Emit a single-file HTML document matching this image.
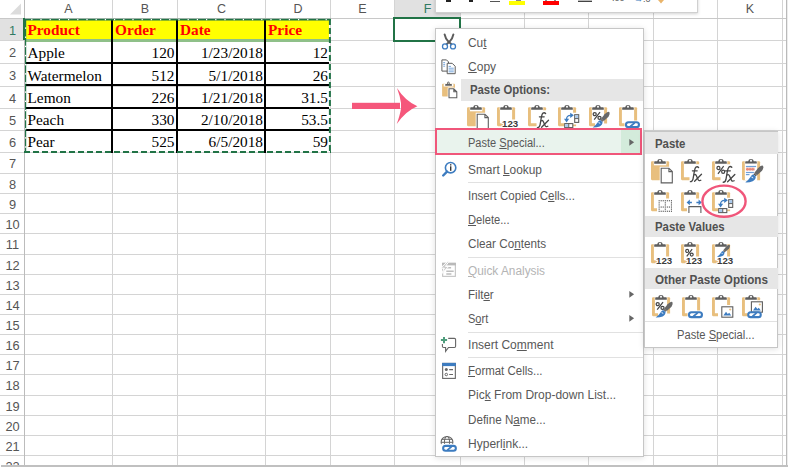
<!DOCTYPE html><html><head><meta charset="utf-8"><style>html,body{margin:0;padding:0;width:788px;height:467px;overflow:hidden;background:#fff;position:relative}.a{position:absolute}.t{position:absolute;white-space:nowrap}u{text-decoration:underline;text-underline-offset:1px}</style></head><body><div class="a" style="left:394px;top:0px;width:66px;height:18px;background:#e1e1e1"></div>
<div class="a" style="left:0px;top:18px;width:24px;height:22px;background:#e1e1e1"></div>
<svg class="a" style="left:0;top:0" width="24" height="18"><polygon points="21,3.5 21,14.5 10,14.5" fill="#dcdcdc"/></svg>
<div class="a" style="left:0px;top:18px;width:786px;height:1px;background:#d4d4d4"></div>
<div class="a" style="left:0px;top:40px;width:786px;height:1px;background:#d4d4d4"></div>
<div class="a" style="left:0px;top:63px;width:786px;height:1px;background:#d4d4d4"></div>
<div class="a" style="left:0px;top:86px;width:786px;height:1px;background:#d4d4d4"></div>
<div class="a" style="left:0px;top:108px;width:786px;height:1px;background:#d4d4d4"></div>
<div class="a" style="left:0px;top:130px;width:786px;height:1px;background:#d4d4d4"></div>
<div class="a" style="left:0px;top:152px;width:786px;height:1px;background:#d4d4d4"></div>
<div class="a" style="left:0px;top:173px;width:786px;height:1px;background:#d4d4d4"></div>
<div class="a" style="left:0px;top:193px;width:786px;height:1px;background:#d4d4d4"></div>
<div class="a" style="left:0px;top:213px;width:786px;height:1px;background:#d4d4d4"></div>
<div class="a" style="left:0px;top:233px;width:786px;height:1px;background:#d4d4d4"></div>
<div class="a" style="left:0px;top:254px;width:786px;height:1px;background:#d4d4d4"></div>
<div class="a" style="left:0px;top:274px;width:786px;height:1px;background:#d4d4d4"></div>
<div class="a" style="left:0px;top:294px;width:786px;height:1px;background:#d4d4d4"></div>
<div class="a" style="left:0px;top:314px;width:786px;height:1px;background:#d4d4d4"></div>
<div class="a" style="left:0px;top:334px;width:786px;height:1px;background:#d4d4d4"></div>
<div class="a" style="left:0px;top:354px;width:786px;height:1px;background:#d4d4d4"></div>
<div class="a" style="left:0px;top:374px;width:786px;height:1px;background:#d4d4d4"></div>
<div class="a" style="left:0px;top:395px;width:786px;height:1px;background:#d4d4d4"></div>
<div class="a" style="left:0px;top:415px;width:786px;height:1px;background:#d4d4d4"></div>
<div class="a" style="left:0px;top:435px;width:786px;height:1px;background:#d4d4d4"></div>
<div class="a" style="left:0px;top:455px;width:786px;height:1px;background:#d4d4d4"></div>
<div class="a" style="left:24px;top:0px;width:1px;height:465px;background:#d4d4d4"></div>
<div class="a" style="left:112px;top:0px;width:1px;height:465px;background:#d4d4d4"></div>
<div class="a" style="left:177px;top:0px;width:1px;height:465px;background:#d4d4d4"></div>
<div class="a" style="left:265px;top:0px;width:1px;height:465px;background:#d4d4d4"></div>
<div class="a" style="left:330px;top:0px;width:1px;height:465px;background:#d4d4d4"></div>
<div class="a" style="left:394px;top:0px;width:1px;height:465px;background:#d4d4d4"></div>
<div class="a" style="left:460px;top:0px;width:1px;height:465px;background:#d4d4d4"></div>
<div class="a" style="left:524px;top:0px;width:1px;height:465px;background:#d4d4d4"></div>
<div class="a" style="left:588px;top:0px;width:1px;height:465px;background:#d4d4d4"></div>
<div class="a" style="left:653px;top:0px;width:1px;height:465px;background:#d4d4d4"></div>
<div class="a" style="left:717px;top:0px;width:1px;height:465px;background:#d4d4d4"></div>
<div class="a" style="left:782px;top:0px;width:1px;height:465px;background:#d4d4d4"></div>
<div class="a" style="left:0px;top:18px;width:786px;height:1px;background:#c8c8c8"></div>
<div class="a" style="left:24px;top:0px;width:1px;height:465px;background:#bcbcbc"></div>
<div class="t" style="left:-31.5px;width:200px;text-align:center;top:2.72px;font:400 12.5px 'Liberation Sans', sans-serif;line-height:12.5px;color:#555;">A</div>
<div class="t" style="left:45.0px;width:200px;text-align:center;top:2.72px;font:400 12.5px 'Liberation Sans', sans-serif;line-height:12.5px;color:#555;">B</div>
<div class="t" style="left:121.5px;width:200px;text-align:center;top:2.72px;font:400 12.5px 'Liberation Sans', sans-serif;line-height:12.5px;color:#555;">C</div>
<div class="t" style="left:198.0px;width:200px;text-align:center;top:2.72px;font:400 12.5px 'Liberation Sans', sans-serif;line-height:12.5px;color:#555;">D</div>
<div class="t" style="left:262.5px;width:200px;text-align:center;top:2.72px;font:400 12.5px 'Liberation Sans', sans-serif;line-height:12.5px;color:#555;">E</div>
<div class="t" style="left:327.5px;width:200px;text-align:center;top:2.72px;font:400 12.5px 'Liberation Sans', sans-serif;line-height:12.5px;color:#2f7a62;">F</div>
<div class="t" style="left:650.0px;width:200px;text-align:center;top:2.72px;font:400 12.5px 'Liberation Sans', sans-serif;line-height:12.5px;color:#555;">K</div>
<div class="t" style="left:-87.5px;width:200px;text-align:center;top:24.86px;font:400 12.8px 'Liberation Sans', sans-serif;line-height:12.8px;color:#2f7a62;">1</div>
<div class="t" style="left:-87.5px;width:200px;text-align:center;top:47.36px;font:400 12.8px 'Liberation Sans', sans-serif;line-height:12.8px;color:#555;">2</div>
<div class="t" style="left:-87.5px;width:200px;text-align:center;top:70.36px;font:400 12.8px 'Liberation Sans', sans-serif;line-height:12.8px;color:#555;">3</div>
<div class="t" style="left:-87.5px;width:200px;text-align:center;top:92.86px;font:400 12.8px 'Liberation Sans', sans-serif;line-height:12.8px;color:#555;">4</div>
<div class="t" style="left:-87.5px;width:200px;text-align:center;top:114.86px;font:400 12.8px 'Liberation Sans', sans-serif;line-height:12.8px;color:#555;">5</div>
<div class="t" style="left:-87.5px;width:200px;text-align:center;top:136.86px;font:400 12.8px 'Liberation Sans', sans-serif;line-height:12.8px;color:#555;">6</div>
<div class="t" style="left:-87.5px;width:200px;text-align:center;top:158.36px;font:400 12.8px 'Liberation Sans', sans-serif;line-height:12.8px;color:#555;">7</div>
<div class="t" style="left:-87.5px;width:200px;text-align:center;top:178.86px;font:400 12.8px 'Liberation Sans', sans-serif;line-height:12.8px;color:#555;">8</div>
<div class="t" style="left:-87.5px;width:200px;text-align:center;top:198.86px;font:400 12.8px 'Liberation Sans', sans-serif;line-height:12.8px;color:#555;">9</div>
<div class="t" style="left:-87.5px;width:200px;text-align:center;top:218.86px;font:400 12.8px 'Liberation Sans', sans-serif;line-height:12.8px;color:#555;">10</div>
<div class="t" style="left:-87.5px;width:200px;text-align:center;top:239.36px;font:400 12.8px 'Liberation Sans', sans-serif;line-height:12.8px;color:#555;">11</div>
<div class="t" style="left:-87.5px;width:200px;text-align:center;top:259.86px;font:400 12.8px 'Liberation Sans', sans-serif;line-height:12.8px;color:#555;">12</div>
<div class="t" style="left:-87.5px;width:200px;text-align:center;top:279.86px;font:400 12.8px 'Liberation Sans', sans-serif;line-height:12.8px;color:#555;">13</div>
<div class="t" style="left:-87.5px;width:200px;text-align:center;top:299.86px;font:400 12.8px 'Liberation Sans', sans-serif;line-height:12.8px;color:#555;">14</div>
<div class="t" style="left:-87.5px;width:200px;text-align:center;top:319.86px;font:400 12.8px 'Liberation Sans', sans-serif;line-height:12.8px;color:#555;">15</div>
<div class="t" style="left:-87.5px;width:200px;text-align:center;top:339.86px;font:400 12.8px 'Liberation Sans', sans-serif;line-height:12.8px;color:#555;">16</div>
<div class="t" style="left:-87.5px;width:200px;text-align:center;top:359.86px;font:400 12.8px 'Liberation Sans', sans-serif;line-height:12.8px;color:#555;">17</div>
<div class="t" style="left:-87.5px;width:200px;text-align:center;top:380.36px;font:400 12.8px 'Liberation Sans', sans-serif;line-height:12.8px;color:#555;">18</div>
<div class="t" style="left:-87.5px;width:200px;text-align:center;top:400.86px;font:400 12.8px 'Liberation Sans', sans-serif;line-height:12.8px;color:#555;">19</div>
<div class="t" style="left:-87.5px;width:200px;text-align:center;top:420.86px;font:400 12.8px 'Liberation Sans', sans-serif;line-height:12.8px;color:#555;">20</div>
<div class="t" style="left:-87.5px;width:200px;text-align:center;top:440.86px;font:400 12.8px 'Liberation Sans', sans-serif;line-height:12.8px;color:#555;">21</div>
<div class="t" style="left:-87.5px;width:200px;text-align:center;top:460.86px;font:400 12.8px 'Liberation Sans', sans-serif;line-height:12.8px;color:#555;">22</div>
<div class="a" style="left:25px;top:19px;width:304px;height:20px;background:#ffff00"></div>
<div class="a" style="left:25px;top:39px;width:304px;height:3px;background:#8fc089"></div>
<div class="a" style="left:111px;top:19px;width:2px;height:134px;background:#000"></div>
<div class="a" style="left:176px;top:19px;width:2px;height:134px;background:#000"></div>
<div class="a" style="left:264px;top:19px;width:2px;height:134px;background:#000"></div>
<div class="a" style="left:25px;top:62px;width:304px;height:2px;background:#000"></div>
<div class="a" style="left:25px;top:84px;width:304px;height:2px;background:#000"></div>
<div class="a" style="left:25px;top:107px;width:304px;height:2px;background:#000"></div>
<div class="a" style="left:25px;top:129px;width:304px;height:2px;background:#000"></div>
<div class="t" style="left:27.5px;top:22.19px;font:700 15.3px 'Liberation Serif', serif;line-height:15.3px;color:#ff0000;">Product</div>
<div class="t" style="left:115px;top:22.19px;font:700 15.3px 'Liberation Serif', serif;line-height:15.3px;color:#ff0000;">Order</div>
<div class="t" style="left:180px;top:22.19px;font:700 15.3px 'Liberation Serif', serif;line-height:15.3px;color:#ff0000;">Date</div>
<div class="t" style="left:268px;top:22.19px;font:700 15.3px 'Liberation Serif', serif;line-height:15.3px;color:#ff0000;">Price</div>
<div class="t" style="left:27.5px;top:45.19px;font:400 15.3px 'Liberation Serif', serif;line-height:15.3px;color:#000;">Apple</div>
<div class="t" style="right:613.5px;top:45.19px;font:400 15.3px 'Liberation Serif', serif;line-height:15.3px;color:#000;">120</div>
<div class="t" style="right:525px;top:45.19px;font:400 15.3px 'Liberation Serif', serif;line-height:15.3px;color:#000;">1/23/2018</div>
<div class="t" style="right:460px;top:45.19px;font:400 15.3px 'Liberation Serif', serif;line-height:15.3px;color:#000;">12</div>
<div class="t" style="left:27.5px;top:67.69px;font:400 15.3px 'Liberation Serif', serif;line-height:15.3px;color:#000;">Watermelon</div>
<div class="t" style="right:613.5px;top:67.69px;font:400 15.3px 'Liberation Serif', serif;line-height:15.3px;color:#000;">512</div>
<div class="t" style="right:525px;top:67.69px;font:400 15.3px 'Liberation Serif', serif;line-height:15.3px;color:#000;">5/1/2018</div>
<div class="t" style="right:460px;top:67.69px;font:400 15.3px 'Liberation Serif', serif;line-height:15.3px;color:#000;">26</div>
<div class="t" style="left:27.5px;top:89.99px;font:400 15.3px 'Liberation Serif', serif;line-height:15.3px;color:#000;">Lemon</div>
<div class="t" style="right:613.5px;top:89.99px;font:400 15.3px 'Liberation Serif', serif;line-height:15.3px;color:#000;">226</div>
<div class="t" style="right:525px;top:89.99px;font:400 15.3px 'Liberation Serif', serif;line-height:15.3px;color:#000;">1/21/2018</div>
<div class="t" style="right:460px;top:89.99px;font:400 15.3px 'Liberation Serif', serif;line-height:15.3px;color:#000;">31.5</div>
<div class="t" style="left:27.5px;top:112.19px;font:400 15.3px 'Liberation Serif', serif;line-height:15.3px;color:#000;">Peach</div>
<div class="t" style="right:613.5px;top:112.19px;font:400 15.3px 'Liberation Serif', serif;line-height:15.3px;color:#000;">330</div>
<div class="t" style="right:525px;top:112.19px;font:400 15.3px 'Liberation Serif', serif;line-height:15.3px;color:#000;">2/10/2018</div>
<div class="t" style="right:460px;top:112.19px;font:400 15.3px 'Liberation Serif', serif;line-height:15.3px;color:#000;">53.5</div>
<div class="t" style="left:27.5px;top:134.39px;font:400 15.3px 'Liberation Serif', serif;line-height:15.3px;color:#000;">Pear</div>
<div class="t" style="right:613.5px;top:134.39px;font:400 15.3px 'Liberation Serif', serif;line-height:15.3px;color:#000;">525</div>
<div class="t" style="right:525px;top:134.39px;font:400 15.3px 'Liberation Serif', serif;line-height:15.3px;color:#000;">6/5/2018</div>
<div class="t" style="right:460px;top:134.39px;font:400 15.3px 'Liberation Serif', serif;line-height:15.3px;color:#000;">59</div>
<svg class="a" style="left:0;top:0" width="788" height="467"><g fill="none" stroke="#217346"><line x1="24" y1="19.6" x2="331" y2="19.6" stroke-width="1.6"/><line x1="24" y1="152" x2="331" y2="152" stroke-width="2" stroke-dasharray="6 3"/><line x1="25.6" y1="19" x2="25.6" y2="153" stroke-width="1.2"/><line x1="329.9" y1="19" x2="329.9" y2="153" stroke-width="2" stroke-dasharray="6 3"/></g><g fill="#fff"><rect x="31.2" y="19" width="1.2" height="1.2"/><rect x="40.4" y="19" width="1.2" height="1.2"/><rect x="49.6" y="19" width="1.2" height="1.2"/><rect x="58.8" y="19" width="1.2" height="1.2"/><rect x="68.0" y="19" width="1.2" height="1.2"/><rect x="77.2" y="19" width="1.2" height="1.2"/><rect x="86.4" y="19" width="1.2" height="1.2"/><rect x="95.6" y="19" width="1.2" height="1.2"/><rect x="104.8" y="19" width="1.2" height="1.2"/><rect x="114.0" y="19" width="1.2" height="1.2"/><rect x="123.2" y="19" width="1.2" height="1.2"/><rect x="132.4" y="19" width="1.2" height="1.2"/><rect x="141.6" y="19" width="1.2" height="1.2"/><rect x="150.8" y="19" width="1.2" height="1.2"/><rect x="160.0" y="19" width="1.2" height="1.2"/><rect x="169.2" y="19" width="1.2" height="1.2"/><rect x="178.4" y="19" width="1.2" height="1.2"/><rect x="187.6" y="19" width="1.2" height="1.2"/><rect x="196.8" y="19" width="1.2" height="1.2"/><rect x="206.0" y="19" width="1.2" height="1.2"/><rect x="215.2" y="19" width="1.2" height="1.2"/><rect x="224.4" y="19" width="1.2" height="1.2"/><rect x="233.6" y="19" width="1.2" height="1.2"/><rect x="242.8" y="19" width="1.2" height="1.2"/><rect x="252.0" y="19" width="1.2" height="1.2"/><rect x="261.2" y="19" width="1.2" height="1.2"/><rect x="270.4" y="19" width="1.2" height="1.2"/><rect x="279.6" y="19" width="1.2" height="1.2"/><rect x="288.8" y="19" width="1.2" height="1.2"/><rect x="298.0" y="19" width="1.2" height="1.2"/><rect x="307.2" y="19" width="1.2" height="1.2"/><rect x="316.4" y="19" width="1.2" height="1.2"/><rect x="325.6" y="19" width="1.2" height="1.2"/><rect x="25" y="27.4" width="1.2" height="1.4"/><rect x="25" y="36.5" width="1.2" height="1.4"/><rect x="25" y="45.7" width="1.2" height="1.4"/><rect x="25" y="54.9" width="1.2" height="1.4"/><rect x="25" y="64.0" width="1.2" height="1.4"/><rect x="25" y="73.2" width="1.2" height="1.4"/><rect x="25" y="82.3" width="1.2" height="1.4"/><rect x="25" y="91.4" width="1.2" height="1.4"/><rect x="25" y="100.6" width="1.2" height="1.4"/><rect x="25" y="109.8" width="1.2" height="1.4"/><rect x="25" y="118.9" width="1.2" height="1.4"/><rect x="25" y="128.1" width="1.2" height="1.4"/><rect x="25" y="137.2" width="1.2" height="1.4"/><rect x="25" y="146.3" width="1.2" height="1.4"/></g></svg>
<div class="a" style="left:23px;top:18px;width:2px;height:22px;background:#217346"></div>
<div class="a" style="left:393px;top:17px;width:68px;height:25px;border:2px solid #217346;box-sizing:border-box"></div>
<div class="a" style="left:786px;top:0px;width:1.3px;height:466px;background:#bababa"></div>
<div class="a" style="left:787.3px;top:0px;width:0.7px;height:467px;background:#ececec"></div>
<div class="a" style="left:1px;top:465px;width:786.5px;height:2px;background:#c0c0c0"></div>
<svg class="a" style="left:0;top:0" width="788" height="467"><g fill="#f5577b"><rect x="352" y="102.8" width="48" height="6.2"/><path d="M397,88.1 Q405.5,101.5 417.4,106.2 Q405.5,111 396.7,124.1 Q400,115 401,108.8 L401,103 Q400,96 397,88.1Z"/></g></svg>
<div class="a" style="left:435px;top:-30px;width:263px;height:42.5px;background:#fff;border:1px solid #d0d0d0;box-sizing:border-box;box-shadow:0 1px 3px rgba(0,0,0,0.18)"></div>
<div class="a" style="left:446px;top:0px;width:5px;height:1.5px;background:#222"></div>
<div class="a" style="left:469px;top:0px;width:4px;height:1.5px;background:#222"></div>
<div class="a" style="left:490px;top:1px;width:10px;height:1px;background:#555"></div>
<div class="a" style="left:516px;top:0px;width:5px;height:1px;background:#888"></div>
<div class="a" style="left:508.5px;top:1px;width:16px;height:3.5px;background:#ffff00"></div>
<div class="a" style="left:545px;top:0px;width:2px;height:1px;background:#888"></div>
<div class="a" style="left:554px;top:0px;width:2px;height:1px;background:#888"></div>
<div class="a" style="left:543px;top:1px;width:16px;height:3.5px;background:#ff0000"></div>
<div class="a" style="left:578px;top:1px;width:14px;height:1.2px;background:#444"></div>
<div class="a" style="left:578px;top:0px;width:14px;height:1px;background:#bbb"></div>
<div class="t" style="left:612px;top:-7px;font:400 9px 'Liberation Sans', sans-serif;color:#555">.00</div>
<div class="t" style="left:634px;top:-6.5px;font:700 9px 'Liberation Sans', sans-serif;color:#3d7cc0">&#8594;<span style="color:#555;font-weight:400">.0</span></div>
<svg class="a" style="left:656px;top:-4px" width="10" height="8"><path d="M5,7.4 L9.2,2.6 L5,-2 L0.8,2.6Z" fill="#e9b46a"/></svg>
<div class="a" style="left:435px;top:28px;width:209px;height:429.3px;background:#fff;border:1px solid #c6c6c6;box-sizing:border-box;box-shadow:0 1px 6px rgba(0,0,0,0.13)"></div>
<svg class="a" style="left:436px;top:30px" width="26" height="26"><path d="M8.6,4.4 Q9.4,8.6 12.4,11.6 L15.4,14.2 M17.4,4.4 Q16.6,8.6 13.6,11.6 L10.6,14.2" stroke="#5c5c5c" stroke-width="2" fill="none" stroke-linecap="round"/><circle cx="9" cy="16.4" r="2.5" fill="none" stroke="#3d7cc0" stroke-width="1.3"/><circle cx="17" cy="16.4" r="2.5" fill="none" stroke="#3d7cc0" stroke-width="1.3"/></svg>
<div class="t" style="left:468.1px;top:36.84px;font:400 12px 'Liberation Sans', sans-serif;line-height:12px;color:#585858;transform:scaleX(0.99);transform-origin:0 0;">Cu<u>t</u></div>
<svg class="a" style="left:436px;top:54px" width="26" height="26"><path d="M5.9,5.9 h4.6 l2,2 v9.2 h-6.6z" fill="#fff" stroke="#5c5c5c" stroke-width="1"/><path d="M11.2,9.3 h5 l3,3 v7.4 h-8z" fill="#fff" stroke="#5c5c5c" stroke-width="1"/><path d="M7.2,8.6 h1.9 M7.2,10.4 h1.9 M7.2,12.2 h1.9" stroke="#6d9fd8" stroke-width="0.9"/><path d="M12.6,12.4 h2.4 M12.6,14.2 h5.2 M12.6,16 h5.2 M12.6,17.8 h5.2" stroke="#6d9fd8" stroke-width="0.9"/></svg>
<div class="t" style="left:468.1px;top:60.84px;font:400 12px 'Liberation Sans', sans-serif;line-height:12px;color:#585858;"><u>C</u>opy</div>
<div class="a" style="left:461px;top:78.5px;width:182px;height:22.5px;background:#e6e6e6"></div>
<svg class="a" style="left:438px;top:78px" width="24" height="24"><rect x="4.1" y="5.7" width="12.9" height="12.8" rx="0.8" fill="#e8bf7e"/><rect x="5.7" y="5.7" width="9.7" height="2.8" fill="#fff"/><path d="M7.2,7.7 V6.5 Q7.2,5.9 7.8,5.9 H9 Q9.2,3.6 10.4,3.6 Q11.6,3.6 11.8,5.9 H13.3 Q13.9,5.9 13.9,6.5 V7.7 Z" fill="#5e5e5e"/><circle cx="10.4" cy="5.1" r="0.6" fill="#fff"/><path d="M11,10.8 h4.8 l3,3 v6 h-7.8z" fill="#fff" stroke="#fff" stroke-width="2.6"/><path d="M11,10.8 h4.8 l3,3 v6 h-7.8z M15.8,10.8 v3 h3" fill="#fff" stroke="#5e5e5e" stroke-width="1.05"/></svg>
<div class="t" style="left:470.3px;top:83.94px;font:700 12px 'Liberation Sans', sans-serif;line-height:12px;color:#505050;transform:scaleX(0.945);transform-origin:0 0;">Paste Options:</div>
<svg class="a" style="left:467.1px;top:105.0px" width="26" height="26" viewBox="0 0 26 26"><rect x="0" y="2.2" width="18.1" height="19" rx="1.1" fill="#e8bf7e"/><rect x="2.9" y="2.2" width="12.4" height="4.1" fill="#fff"/><path d="M3.2,4.7 V2.9 Q3.2,2.2 3.9,2.2 H6.2 Q6.4,0 9,0 Q11.6,0 11.8,2.2 H14.1 Q14.8,2.2 14.8,2.9 V4.7 Z" fill="#5e5e5e" stroke="#fff" stroke-width="0.9" paint-order="stroke"/><circle cx="9" cy="1.75" r="1.0" fill="#fff"/><path d="M10.2,9.2 h7.699999999999999 l3.4,3.4 v11.299999999999999 h-11.1z" fill="#fff" stroke="#fff" stroke-width="3"/><path d="M10.2,9.2 h7.699999999999999 l3.4,3.4 v11.299999999999999 h-11.1z M17.9,9.2 v3.4 h3.4" fill="#fff" stroke="#5e5e5e" stroke-width="1.1"/></svg>
<svg class="a" style="left:497.46px;top:105.0px" width="26" height="26" viewBox="0 0 26 26"><path d="M0,3.3 Q0,2.2 1.1,2.2 H2.9 V18.3 H6 V21.2 H1.1 Q0,21.2 0,20.1 Z" fill="#e8bf7e"/><path d="M15.1,2.2 H17 Q18.1,2.2 18.1,3.3 V14.4 H15.1 Z" fill="#e8bf7e"/><path d="M3.2,4.7 V2.9 Q3.2,2.2 3.9,2.2 H6.2 Q6.4,0 9,0 Q11.6,0 11.8,2.2 H14.1 Q14.8,2.2 14.8,2.9 V4.7 Z" fill="#5e5e5e" stroke="#fff" stroke-width="0.9" paint-order="stroke"/><circle cx="9" cy="1.75" r="1.0" fill="#fff"/><text x="5.0" y="22.1" font-family="Liberation Sans" font-weight="700" font-size="9.2" fill="#fff" stroke="#fff" stroke-width="1.6" textLength="16.2" lengthAdjust="spacingAndGlyphs">123</text><text x="5.0" y="22.1" font-family="Liberation Sans" font-weight="700" font-size="9.2" fill="#3c3c3c" textLength="16.2" lengthAdjust="spacingAndGlyphs">123</text></svg>
<svg class="a" style="left:527.82px;top:105.0px" width="26" height="26" viewBox="0 0 26 26"><path d="M0,3.3 Q0,2.2 1.1,2.2 H2.9 V18.3 H8.5 V21.2 H1.1 Q0,21.2 0,20.1 Z" fill="#e8bf7e"/><path d="M15.1,2.2 H17 Q18.1,2.2 18.1,3.3 V5.3 H15.1 Z" fill="#e8bf7e"/><path d="M3.2,4.7 V2.9 Q3.2,2.2 3.9,2.2 H6.2 Q6.4,0 9,0 Q11.6,0 11.8,2.2 H14.1 Q14.8,2.2 14.8,2.9 V4.7 Z" fill="#5e5e5e" stroke="#fff" stroke-width="0.9" paint-order="stroke"/><circle cx="9" cy="1.75" r="1.0" fill="#fff"/><g transform="translate(-0.4,0.1) scale(1.0)" fill="none" stroke="#454545" stroke-width="1.3" stroke-linecap="round"><path d="M18,8.4 Q16.8,7.1 15.4,8 Q14.4,8.8 13.8,12 L12.4,20 Q11.8,22.6 9.8,22.6"/><path d="M11.8,11.7 H16.6"/><path d="M13.8,15.6 Q15,14.9 15.8,16.6 L17.6,20.6 Q18.4,22.2 20.2,21.2"/><path d="M20.9,15.2 L14,22.2"/></g></svg>
<svg class="a" style="left:558.18px;top:105.0px" width="26" height="26" viewBox="0 0 26 26"><path d="M0,3.3 Q0,2.2 1.1,2.2 H2.9 V18.3 H6 V21.2 H1.1 Q0,21.2 0,20.1 Z" fill="#e8bf7e"/><path d="M15.1,2.2 H17 Q18.1,2.2 18.1,3.3 V7.8 H15.1 Z" fill="#e8bf7e"/><rect x="15.1" y="19.5" width="3" height="1.6999999999999993" fill="#e8bf7e"/><path d="M3.2,4.7 V2.9 Q3.2,2.2 3.9,2.2 H6.2 Q6.4,0 9,0 Q11.6,0 11.8,2.2 H14.1 Q14.8,2.2 14.8,2.9 V4.7 Z" fill="#5e5e5e" stroke="#fff" stroke-width="0.9" paint-order="stroke"/><circle cx="9" cy="1.75" r="1.0" fill="#fff"/><path d="M8.6,14.4 Q8.4,10.4 12.8,10.3" stroke="#3d7cc0" stroke-width="1.3" fill="none"/><path d="M12.2,7.7 L15.9,10.3 L12.2,12.9 Z" fill="#3d7cc0"/><path d="M6,13.8 L8.6,17.5 L11.2,13.8 Z" fill="#3d7cc0"/><rect x="16.7" y="9.7" width="4" height="7.7" fill="#fff" stroke="#5e5e5e" stroke-width="1.1"/><rect x="17.25" y="10.25" width="2.9" height="3.2" fill="#a9c9ec"/><line x1="16.7" y1="13.6" x2="20.7" y2="13.6" stroke="#5e5e5e" stroke-width="1"/><rect x="6.7" y="18.6" width="8.1" height="4" fill="#fff" stroke="#5e5e5e" stroke-width="1.1"/><rect x="7.25" y="19.15" width="3.3" height="2.9" fill="#a9c9ec"/><line x1="10.75" y1="18.6" x2="10.75" y2="22.6" stroke="#5e5e5e" stroke-width="1"/></svg>
<svg class="a" style="left:588.54px;top:105.0px" width="26" height="26" viewBox="0 0 26 26"><path d="M0,3.3 Q0,2.2 1.1,2.2 H2.9 V18.3 H6 V21.2 H1.1 Q0,21.2 0,20.1 Z" fill="#e8bf7e"/><path d="M15.1,2.2 H17 Q18.1,2.2 18.1,3.3 V18.4 H15.1 Z" fill="#e8bf7e"/><path d="M3.2,4.7 V2.9 Q3.2,2.2 3.9,2.2 H6.2 Q6.4,0 9,0 Q11.6,0 11.8,2.2 H14.1 Q14.8,2.2 14.8,2.9 V4.7 Z" fill="#5e5e5e" stroke="#fff" stroke-width="0.9" paint-order="stroke"/><circle cx="9" cy="1.75" r="1.0" fill="#fff"/><g transform="translate(3.6,7.02) scale(1.000,0.986)" fill="none" stroke="#454545" stroke-width="1.25"><ellipse cx="2.1" cy="2.1" rx="1.55" ry="1.6"/><ellipse cx="6.9" cy="5.9" rx="1.55" ry="1.6"/><path d="M7.4,0.2 L1.6,7.8"/></g><g transform="translate(0.8,2.7) scale(0.85)"><path d="M17.4,7.8 Q21,3.8 23,5 Q24.2,6.8 22,10.6 L16.4,15.6 L13.3,12.9 Z" fill="#686868"/><path d="M13.4,13.3 L16.1,15.6 L15.1,16.6 L12.4,14.3 Z" fill="#4e4e4e"/><path d="M12.2,14.4 L15,16.8 Q15.2,20.2 11.6,22.1 Q8,23.6 3.4,23.4 Q6.8,21 8.9,17.7 Q10.4,14.9 12.2,14.4 Z" fill="#3d7cc0"/><path d="M10.3,17.6 Q11.7,17.2 11.9,18.8" stroke="#fff" stroke-width="1.1" fill="none"/></g></svg>
<svg class="a" style="left:618.9px;top:105.0px" width="26" height="26" viewBox="0 0 26 26"><path d="M0,3.3 Q0,2.2 1.1,2.2 H2.9 V18.3 H5.5 V21.2 H1.1 Q0,21.2 0,20.1 Z" fill="#e8bf7e"/><path d="M15.1,2.2 H17 Q18.1,2.2 18.1,3.3 V15.6 H15.1 Z" fill="#e8bf7e"/><path d="M3.2,4.7 V2.9 Q3.2,2.2 3.9,2.2 H6.2 Q6.4,0 9,0 Q11.6,0 11.8,2.2 H14.1 Q14.8,2.2 14.8,2.9 V4.7 Z" fill="#5e5e5e" stroke="#fff" stroke-width="0.9" paint-order="stroke"/><circle cx="9" cy="1.75" r="1.0" fill="#fff"/><g transform="translate(5.9,16.2) scale(1.000,1.000)"><rect x="1.05" y="1.05" width="13" height="4.9" rx="2.45" fill="none" stroke="#3d7cc0" stroke-width="2.1"/><path d="M5.4,5.3 L9.7,1.7" stroke="#3d7cc0" stroke-width="1.8"/></g></svg>
<div class="a" style="left:435px;top:128.3px;width:207px;height:26.6px;background:#e9f3ed;border:2px solid #f0567a;box-sizing:border-box"></div>
<div class="a" style="left:620.5px;top:130.3px;width:19.3px;height:22.6px;background:#d3ebdb"></div>
<div class="t" style="left:468.1px;top:137.44px;font:400 12px 'Liberation Sans', sans-serif;line-height:12px;color:#585858;transform:scaleX(0.92);transform-origin:0 0;">Paste <u>S</u>pecial...</div>
<svg class="a" style="left:628px;top:138px" width="8" height="9"><path d="M1.3,1 L6.1,4.35 L1.3,7.7Z" fill="#666"/></svg>
<svg class="a" style="left:440px;top:160px" width="20" height="20"><circle cx="10.6" cy="7.7" r="5.2" fill="#fff" stroke="#3d7cc0" stroke-width="1.6"/><path d="M7,11.6 L3.2,15.5" stroke="#3d7cc0" stroke-width="2.4" stroke-linecap="round"/><rect x="10" y="4.2" width="1.4" height="1.3" fill="#333"/><rect x="10" y="6.3" width="1.4" height="4.5" fill="#333"/></svg>
<div class="t" style="left:468.1px;top:164.44px;font:400 12px 'Liberation Sans', sans-serif;line-height:12px;color:#585858;transform:scaleX(0.99);transform-origin:0 0;">Smart <u>L</u>ookup</div>
<div class="a" style="left:468px;top:181.5px;width:175px;height:1px;background:#e1e1e1"></div>
<div class="t" style="left:468.1px;top:190.24px;font:400 12px 'Liberation Sans', sans-serif;line-height:12px;color:#585858;transform:scaleX(0.96);transform-origin:0 0;">Insert Copied C<u>e</u>lls...</div>
<div class="t" style="left:468.1px;top:214.34px;font:400 12px 'Liberation Sans', sans-serif;line-height:12px;color:#585858;transform:scaleX(0.93);transform-origin:0 0;"><u>D</u>elete...</div>
<div class="t" style="left:468.1px;top:238.44px;font:400 12px 'Liberation Sans', sans-serif;line-height:12px;color:#585858;transform:scaleX(0.976);transform-origin:0 0;">Clear Co<u>n</u>tents</div>
<div class="a" style="left:468px;top:257px;width:175px;height:1px;background:#e1e1e1"></div>
<svg class="a" style="left:436px;top:258px" width="26" height="26"><rect x="6.65" y="5.35" width="12.7" height="13" fill="#fff" stroke="#c2c2c2" stroke-width="1.1"/><rect x="6.1" y="4.8" width="13.8" height="2.6" fill="#b9b9b9"/><path d="M10.3,9.8 h4.8 M10.3,13.2 h7.4 M10.3,15.9 h5.1" stroke="#bdbdbd" stroke-width="1.5"/><path d="M11.8,3.2 L4.6,10.2 L8.4,10.2 L5.4,16 L12.8,8.4 L9.4,8.4 L13.2,3.2 Z" fill="#cbcbcb" stroke="#fff" stroke-width="1"/></svg>
<div class="t" style="left:468.1px;top:265.04px;font:400 12px 'Liberation Sans', sans-serif;line-height:12px;color:#b4b4b4;transform:scaleX(0.987);transform-origin:0 0;"><u>Q</u>uick Analysis</div>
<div class="t" style="left:468.1px;top:288.74px;font:400 12px 'Liberation Sans', sans-serif;line-height:12px;color:#585858;transform:scaleX(0.964);transform-origin:0 0;">Filt<u>e</u>r</div>
<svg class="a" style="left:628px;top:289.5px" width="8" height="9"><path d="M1.3,1 L6.1,4.35 L1.3,7.7Z" fill="#666"/></svg>
<div class="t" style="left:468.1px;top:312.94px;font:400 12px 'Liberation Sans', sans-serif;line-height:12px;color:#585858;transform:scaleX(0.92);transform-origin:0 0;">S<u>o</u>rt</div>
<svg class="a" style="left:628px;top:313.5px" width="8" height="9"><path d="M1.3,1 L6.1,4.35 L1.3,7.7Z" fill="#666"/></svg>
<div class="a" style="left:468px;top:331.5px;width:175px;height:1px;background:#e1e1e1"></div>
<svg class="a" style="left:436px;top:334px" width="26" height="26"><path d="M12.2,4.4 H18.4 Q19.6,4.4 19.6,5.6 V12.3 Q19.6,13.5 18.4,13.5 H12.5 L9.6,17.3 V13.5 H7.6 Q6.4,13.5 6.4,12.3 V10" fill="none" stroke="#666" stroke-width="1.1"/><path d="M8,3 v6.2 M4.9,6.1 h6.2" stroke="#4f9d7d" stroke-width="2"/></svg>
<div class="t" style="left:468.1px;top:339.24px;font:400 12px 'Liberation Sans', sans-serif;line-height:12px;color:#585858;">Insert Co<u>m</u>ment</div>
<div class="a" style="left:468px;top:357.3px;width:175px;height:1px;background:#e1e1e1"></div>
<svg class="a" style="left:436px;top:360px" width="26" height="26"><rect x="6.65" y="3.4" width="12.7" height="15" fill="#fff" stroke="#666" stroke-width="1.1"/><rect x="6.1" y="2.9" width="13.8" height="3.2" fill="#3d7cc0"/><circle cx="10.3" cy="9.6" r="1.5" fill="#666"/><circle cx="10.3" cy="14.5" r="1.25" fill="none" stroke="#666" stroke-width="1"/><path d="M13.2,9.6 H17 M13.2,14.5 H17" stroke="#666" stroke-width="1.2"/></svg>
<div class="t" style="left:468.1px;top:365.44px;font:400 12px 'Liberation Sans', sans-serif;line-height:12px;color:#585858;transform:scaleX(0.955);transform-origin:0 0;"><u>F</u>ormat Cells...</div>
<div class="t" style="left:468.1px;top:388.94px;font:400 12px 'Liberation Sans', sans-serif;line-height:12px;color:#585858;">Pic<u>k</u> From Drop-down List...</div>
<div class="t" style="left:468.1px;top:413.64px;font:400 12px 'Liberation Sans', sans-serif;line-height:12px;color:#585858;transform:scaleX(0.97);transform-origin:0 0;">Define N<u>a</u>me...</div>
<svg class="a" style="left:436px;top:430px" width="26" height="26"><circle cx="11" cy="12.3" r="5.9" fill="#fff" stroke="#666" stroke-width="1.05"/><ellipse cx="11" cy="12.3" rx="2.6" ry="5.9" fill="none" stroke="#666" stroke-width="1"/><path d="M5.6,9.3 h10.8 M5.1,12.3 h11.8" stroke="#666" stroke-width="1"/><rect x="5.1" y="13.8" width="17" height="9" fill="#fff"/><g transform="translate(6.1,14.8) scale(0.980,1.000)"><rect x="1.05" y="1.05" width="13" height="4.9" rx="2.45" fill="none" stroke="#3d7cc0" stroke-width="2.1"/><path d="M5.4,5.3 L9.7,1.7" stroke="#3d7cc0" stroke-width="1.8"/></g></svg>
<div class="t" style="left:468.1px;top:437.74px;font:400 12px 'Liberation Sans', sans-serif;line-height:12px;color:#585858;">Hyperl<u>i</u>nk...</div>
<div class="a" style="left:643.5px;top:130.8px;width:134.6px;height:216.8px;background:#fff;border:1px solid #c6c6c6;box-sizing:border-box;box-shadow:0 1px 6px rgba(0,0,0,0.13)"></div>
<div class="a" style="left:644.5px;top:132.2px;width:133px;height:22.2px;background:#e6e6e6"></div>
<div class="t" style="left:654.5px;top:138.34px;font:700 12px 'Liberation Sans', sans-serif;line-height:12px;color:#505050;transform:scaleX(0.95);transform-origin:0 0;">Paste</div>
<svg class="a" style="left:650.7px;top:159.0px" width="26" height="26" viewBox="0 0 26 26"><rect x="0" y="2.2" width="18.1" height="19" rx="1.1" fill="#e8bf7e"/><rect x="2.9" y="2.2" width="12.4" height="4.1" fill="#fff"/><path d="M3.2,4.7 V2.9 Q3.2,2.2 3.9,2.2 H6.2 Q6.4,0 9,0 Q11.6,0 11.8,2.2 H14.1 Q14.8,2.2 14.8,2.9 V4.7 Z" fill="#5e5e5e" stroke="#fff" stroke-width="0.9" paint-order="stroke"/><circle cx="9" cy="1.75" r="1.0" fill="#fff"/><path d="M10.2,9.2 h7.699999999999999 l3.4,3.4 v11.299999999999999 h-11.1z" fill="#fff" stroke="#fff" stroke-width="3"/><path d="M10.2,9.2 h7.699999999999999 l3.4,3.4 v11.299999999999999 h-11.1z M17.9,9.2 v3.4 h3.4" fill="#fff" stroke="#5e5e5e" stroke-width="1.1"/></svg>
<svg class="a" style="left:681.1px;top:159.0px" width="26" height="26" viewBox="0 0 26 26"><path d="M0,3.3 Q0,2.2 1.1,2.2 H2.9 V18.3 H8.5 V21.2 H1.1 Q0,21.2 0,20.1 Z" fill="#e8bf7e"/><path d="M15.1,2.2 H17 Q18.1,2.2 18.1,3.3 V5.3 H15.1 Z" fill="#e8bf7e"/><path d="M3.2,4.7 V2.9 Q3.2,2.2 3.9,2.2 H6.2 Q6.4,0 9,0 Q11.6,0 11.8,2.2 H14.1 Q14.8,2.2 14.8,2.9 V4.7 Z" fill="#5e5e5e" stroke="#fff" stroke-width="0.9" paint-order="stroke"/><circle cx="9" cy="1.75" r="1.0" fill="#fff"/><g transform="translate(-0.4,0.1) scale(1.0)" fill="none" stroke="#454545" stroke-width="1.3" stroke-linecap="round"><path d="M18,8.4 Q16.8,7.1 15.4,8 Q14.4,8.8 13.8,12 L12.4,20 Q11.8,22.6 9.8,22.6"/><path d="M11.8,11.7 H16.6"/><path d="M13.8,15.6 Q15,14.9 15.8,16.6 L17.6,20.6 Q18.4,22.2 20.2,21.2"/><path d="M20.9,15.2 L14,22.2"/></g></svg>
<svg class="a" style="left:711.5px;top:159.0px" width="26" height="26" viewBox="0 0 26 26"><path d="M0,3.3 Q0,2.2 1.1,2.2 H2.9 V18.3 H8.5 V21.2 H1.1 Q0,21.2 0,20.1 Z" fill="#e8bf7e"/><path d="M15.1,2.2 H17 Q18.1,2.2 18.1,3.3 V5.3 H15.1 Z" fill="#e8bf7e"/><path d="M3.2,4.7 V2.9 Q3.2,2.2 3.9,2.2 H6.2 Q6.4,0 9,0 Q11.6,0 11.8,2.2 H14.1 Q14.8,2.2 14.8,2.9 V4.7 Z" fill="#5e5e5e" stroke="#fff" stroke-width="0.9" paint-order="stroke"/><circle cx="9" cy="1.75" r="1.0" fill="#fff"/><g transform="translate(4.4,6.82) scale(0.978,1.022)" fill="none" stroke="#454545" stroke-width="1.25"><ellipse cx="2.1" cy="2.1" rx="1.55" ry="1.6"/><ellipse cx="6.9" cy="5.9" rx="1.55" ry="1.6"/><path d="M7.4,0.2 L1.6,7.8"/></g><g transform="translate(0.9,-0.5) scale(1.05)" fill="none" stroke="#454545" stroke-width="1.25" stroke-linecap="round"><path d="M18,8.4 Q16.8,7.1 15.4,8 Q14.4,8.8 13.8,12 L12.4,20 Q11.8,22.6 9.8,22.6"/><path d="M11.8,11.7 H16.6"/><path d="M13.8,15.6 Q15,14.9 15.8,16.6 L17.6,20.6 Q18.4,22.2 20.2,21.2"/><path d="M20.9,15.2 L14,22.2"/></g></svg>
<svg class="a" style="left:741.9px;top:159.0px" width="26" height="26" viewBox="0 0 26 26"><path d="M0,3.3 Q0,2.2 1.1,2.2 H2.9 V18.3 H6 V21.2 H1.1 Q0,21.2 0,20.1 Z" fill="#e8bf7e"/><path d="M15.1,2.2 H17 Q18.1,2.2 18.1,3.3 V21.2 H15.1 Z" fill="#e8bf7e"/><path d="M3.2,4.7 V2.9 Q3.2,2.2 3.9,2.2 H6.2 Q6.4,0 9,0 Q11.6,0 11.8,2.2 H14.1 Q14.8,2.2 14.8,2.9 V4.7 Z" fill="#5e5e5e" stroke="#fff" stroke-width="0.9" paint-order="stroke"/><circle cx="9" cy="1.75" r="1.0" fill="#fff"/><rect x="2.9" y="4.7" width="12.2" height="16.5" fill="#fff"/><rect x="3.9" y="6.9" width="10.2" height="1.2" fill="#6f9fd6"/><rect x="3.9" y="8.7" width="8.7" height="3" fill="#e98677"/><rect x="4.4" y="8.7" width="0.7" height="0.7" fill="#fff"/><rect x="4.4" y="11" width="0.7" height="0.7" fill="#fff"/><rect x="6.0" y="8.7" width="0.7" height="0.7" fill="#fff"/><rect x="6.0" y="11" width="0.7" height="0.7" fill="#fff"/><rect x="7.6" y="8.7" width="0.7" height="0.7" fill="#fff"/><rect x="7.6" y="11" width="0.7" height="0.7" fill="#fff"/><rect x="9.2" y="8.7" width="0.7" height="0.7" fill="#fff"/><rect x="9.2" y="11" width="0.7" height="0.7" fill="#fff"/><rect x="10.8" y="8.7" width="0.7" height="0.7" fill="#fff"/><rect x="10.8" y="11" width="0.7" height="0.7" fill="#fff"/><rect x="12.4" y="8.7" width="0.7" height="0.7" fill="#fff"/><rect x="12.4" y="11" width="0.7" height="0.7" fill="#fff"/><rect x="3.9" y="12.9" width="8" height="1.2" fill="#6f9fd6"/><rect x="3.9" y="15" width="3.6" height="1.2" fill="#6f9fd6"/><g transform="translate(0.24,2.3) scale(0.9)"><path d="M17.4,7.8 Q21,3.8 23,5 Q24.2,6.8 22,10.6 L16.4,15.6 L13.3,12.9 Z" fill="#686868"/><path d="M13.4,13.3 L16.1,15.6 L15.1,16.6 L12.4,14.3 Z" fill="#4e4e4e"/><path d="M12.2,14.4 L15,16.8 Q15.2,20.2 11.6,22.1 Q8,23.6 3.4,23.4 Q6.8,21 8.9,17.7 Q10.4,14.9 12.2,14.4 Z" fill="#3d7cc0"/><path d="M10.3,17.6 Q11.7,17.2 11.9,18.8" stroke="#fff" stroke-width="1.1" fill="none"/></g></svg>
<svg class="a" style="left:650.7px;top:189.6px" width="26" height="26" viewBox="0 0 26 26"><path d="M0,3.3 Q0,2.2 1.1,2.2 H2.9 V18.3 H6 V21.2 H1.1 Q0,21.2 0,20.1 Z" fill="#e8bf7e"/><path d="M15.1,2.2 H17 Q18.1,2.2 18.1,3.3 V8.4 H15.1 Z" fill="#e8bf7e"/><path d="M3.2,4.7 V2.9 Q3.2,2.2 3.9,2.2 H6.2 Q6.4,0 9,0 Q11.6,0 11.8,2.2 H14.1 Q14.8,2.2 14.8,2.9 V4.7 Z" fill="#5e5e5e" stroke="#fff" stroke-width="0.9" paint-order="stroke"/><circle cx="9" cy="1.75" r="1.0" fill="#fff"/><rect x="7.60" y="10.20" width="1.1" height="1.1" fill="#4a4a4a"/><rect x="7.60" y="12.30" width="1.1" height="1.1" fill="#4a4a4a"/><rect x="7.60" y="14.40" width="1.1" height="1.1" fill="#4a4a4a"/><rect x="7.60" y="16.50" width="1.1" height="1.1" fill="#4a4a4a"/><rect x="7.60" y="18.60" width="1.1" height="1.1" fill="#4a4a4a"/><rect x="7.60" y="20.70" width="1.1" height="1.1" fill="#4a4a4a"/><rect x="9.65" y="10.20" width="1.1" height="1.1" fill="#4a4a4a"/><rect x="9.65" y="16.50" width="1.1" height="1.1" fill="#4a4a4a"/><rect x="9.65" y="20.70" width="1.1" height="1.1" fill="#4a4a4a"/><rect x="11.70" y="10.20" width="1.1" height="1.1" fill="#4a4a4a"/><rect x="11.70" y="16.50" width="1.1" height="1.1" fill="#4a4a4a"/><rect x="11.70" y="20.70" width="1.1" height="1.1" fill="#4a4a4a"/><rect x="13.75" y="10.20" width="1.1" height="1.1" fill="#4a4a4a"/><rect x="13.75" y="12.30" width="1.1" height="1.1" fill="#4a4a4a"/><rect x="13.75" y="14.40" width="1.1" height="1.1" fill="#4a4a4a"/><rect x="13.75" y="16.50" width="1.1" height="1.1" fill="#4a4a4a"/><rect x="13.75" y="18.60" width="1.1" height="1.1" fill="#4a4a4a"/><rect x="13.75" y="20.70" width="1.1" height="1.1" fill="#4a4a4a"/><rect x="15.80" y="10.20" width="1.1" height="1.1" fill="#4a4a4a"/><rect x="15.80" y="16.50" width="1.1" height="1.1" fill="#4a4a4a"/><rect x="15.80" y="20.70" width="1.1" height="1.1" fill="#4a4a4a"/><rect x="17.85" y="10.20" width="1.1" height="1.1" fill="#4a4a4a"/><rect x="17.85" y="16.50" width="1.1" height="1.1" fill="#4a4a4a"/><rect x="17.85" y="20.70" width="1.1" height="1.1" fill="#4a4a4a"/><rect x="19.90" y="10.20" width="1.1" height="1.1" fill="#4a4a4a"/><rect x="19.90" y="12.30" width="1.1" height="1.1" fill="#4a4a4a"/><rect x="19.90" y="14.40" width="1.1" height="1.1" fill="#4a4a4a"/><rect x="19.90" y="16.50" width="1.1" height="1.1" fill="#4a4a4a"/><rect x="19.90" y="18.60" width="1.1" height="1.1" fill="#4a4a4a"/><rect x="19.90" y="20.70" width="1.1" height="1.1" fill="#4a4a4a"/></svg>
<svg class="a" style="left:681.1px;top:189.6px" width="26" height="26" viewBox="0 0 26 26"><path d="M0,3.3 Q0,2.2 1.1,2.2 H2.9 V18.3 H6 V21.2 H1.1 Q0,21.2 0,20.1 Z" fill="#e8bf7e"/><path d="M15.1,2.2 H17 Q18.1,2.2 18.1,3.3 V8.4 H15.1 Z" fill="#e8bf7e"/><path d="M3.2,4.7 V2.9 Q3.2,2.2 3.9,2.2 H6.2 Q6.4,0 9,0 Q11.6,0 11.8,2.2 H14.1 Q14.8,2.2 14.8,2.9 V4.7 Z" fill="#5e5e5e" stroke="#fff" stroke-width="0.9" paint-order="stroke"/><circle cx="9" cy="1.75" r="1.0" fill="#fff"/><path d="M7.5,12.4 h3.4 M15.4,12.4 h3.4" stroke="#3d7cc0" stroke-width="1.5"/><path d="M5.6,12.4 l3.2,-2.8 v5.6z M20.8,12.4 l-3.2,-2.8 v5.6z" fill="#3d7cc0"/><path d="M7.9,23 v-6.4 h12 v6.4" fill="none" stroke="#5e5e5e" stroke-width="1.1"/></svg>
<svg class="a" style="left:711.5px;top:189.6px" width="26" height="26" viewBox="0 0 26 26"><path d="M0,3.3 Q0,2.2 1.1,2.2 H2.9 V18.3 H6 V21.2 H1.1 Q0,21.2 0,20.1 Z" fill="#e8bf7e"/><path d="M15.1,2.2 H17 Q18.1,2.2 18.1,3.3 V7.8 H15.1 Z" fill="#e8bf7e"/><rect x="15.1" y="19.5" width="3" height="1.6999999999999993" fill="#e8bf7e"/><path d="M3.2,4.7 V2.9 Q3.2,2.2 3.9,2.2 H6.2 Q6.4,0 9,0 Q11.6,0 11.8,2.2 H14.1 Q14.8,2.2 14.8,2.9 V4.7 Z" fill="#5e5e5e" stroke="#fff" stroke-width="0.9" paint-order="stroke"/><circle cx="9" cy="1.75" r="1.0" fill="#fff"/><path d="M8.6,14.4 Q8.4,10.4 12.8,10.3" stroke="#3d7cc0" stroke-width="1.3" fill="none"/><path d="M12.2,7.7 L15.9,10.3 L12.2,12.9 Z" fill="#3d7cc0"/><path d="M6,13.8 L8.6,17.5 L11.2,13.8 Z" fill="#3d7cc0"/><rect x="16.7" y="9.7" width="4" height="7.7" fill="#fff" stroke="#5e5e5e" stroke-width="1.1"/><rect x="17.25" y="10.25" width="2.9" height="3.2" fill="#a9c9ec"/><line x1="16.7" y1="13.6" x2="20.7" y2="13.6" stroke="#5e5e5e" stroke-width="1"/><rect x="6.7" y="18.6" width="8.1" height="4" fill="#fff" stroke="#5e5e5e" stroke-width="1.1"/><rect x="7.25" y="19.15" width="3.3" height="2.9" fill="#a9c9ec"/><line x1="10.75" y1="18.6" x2="10.75" y2="22.6" stroke="#5e5e5e" stroke-width="1"/></svg>
<div class="a" style="left:644.5px;top:216.2px;width:133px;height:21.3px;background:#e6e6e6"></div>
<div class="t" style="left:654.5px;top:220.74px;font:700 12px 'Liberation Sans', sans-serif;line-height:12px;color:#505050;transform:scaleX(0.95);transform-origin:0 0;">Paste Values</div>
<svg class="a" style="left:651.1px;top:242.2px" width="26" height="26" viewBox="0 0 26 26"><path d="M0,3.3 Q0,2.2 1.1,2.2 H2.9 V18.3 H6 V21.2 H1.1 Q0,21.2 0,20.1 Z" fill="#e8bf7e"/><path d="M15.1,2.2 H17 Q18.1,2.2 18.1,3.3 V14.4 H15.1 Z" fill="#e8bf7e"/><path d="M3.2,4.7 V2.9 Q3.2,2.2 3.9,2.2 H6.2 Q6.4,0 9,0 Q11.6,0 11.8,2.2 H14.1 Q14.8,2.2 14.8,2.9 V4.7 Z" fill="#5e5e5e" stroke="#fff" stroke-width="0.9" paint-order="stroke"/><circle cx="9" cy="1.75" r="1.0" fill="#fff"/><text x="5.0" y="22.1" font-family="Liberation Sans" font-weight="700" font-size="9.2" fill="#fff" stroke="#fff" stroke-width="1.6" textLength="16.2" lengthAdjust="spacingAndGlyphs">123</text><text x="5.0" y="22.1" font-family="Liberation Sans" font-weight="700" font-size="9.2" fill="#3c3c3c" textLength="16.2" lengthAdjust="spacingAndGlyphs">123</text></svg>
<svg class="a" style="left:681.3px;top:242.2px" width="26" height="26" viewBox="0 0 26 26"><path d="M0,3.3 Q0,2.2 1.1,2.2 H2.9 V18.3 H6 V21.2 H1.1 Q0,21.2 0,20.1 Z" fill="#e8bf7e"/><path d="M15.1,2.2 H17 Q18.1,2.2 18.1,3.3 V14.4 H15.1 Z" fill="#e8bf7e"/><path d="M3.2,4.7 V2.9 Q3.2,2.2 3.9,2.2 H6.2 Q6.4,0 9,0 Q11.6,0 11.8,2.2 H14.1 Q14.8,2.2 14.8,2.9 V4.7 Z" fill="#5e5e5e" stroke="#fff" stroke-width="0.9" paint-order="stroke"/><circle cx="9" cy="1.75" r="1.0" fill="#fff"/><g transform="translate(4.2,6.93) scale(0.944,0.958)" fill="none" stroke="#454545" stroke-width="1.25"><ellipse cx="2.1" cy="2.1" rx="1.55" ry="1.6"/><ellipse cx="6.9" cy="5.9" rx="1.55" ry="1.6"/><path d="M7.4,0.2 L1.6,7.8"/></g><text x="5.0" y="22.1" font-family="Liberation Sans" font-weight="700" font-size="9.2" fill="#fff" stroke="#fff" stroke-width="1.6" textLength="16.2" lengthAdjust="spacingAndGlyphs">123</text><text x="5.0" y="22.1" font-family="Liberation Sans" font-weight="700" font-size="9.2" fill="#3c3c3c" textLength="16.2" lengthAdjust="spacingAndGlyphs">123</text></svg>
<svg class="a" style="left:711.5px;top:242.2px" width="26" height="26" viewBox="0 0 26 26"><path d="M0,3.3 Q0,2.2 1.1,2.2 H2.9 V18.3 H6 V21.2 H1.1 Q0,21.2 0,20.1 Z" fill="#e8bf7e"/><path d="M15.1,2.2 H17 Q18.1,2.2 18.1,3.3 V14.4 H15.1 Z" fill="#e8bf7e"/><path d="M3.2,4.7 V2.9 Q3.2,2.2 3.9,2.2 H6.2 Q6.4,0 9,0 Q11.6,0 11.8,2.2 H14.1 Q14.8,2.2 14.8,2.9 V4.7 Z" fill="#5e5e5e" stroke="#fff" stroke-width="0.9" paint-order="stroke"/><circle cx="9" cy="1.75" r="1.0" fill="#fff"/><g transform="translate(2.8,-0.3) scale(0.65)"><path d="M17.4,7.8 Q21,3.8 23,5 Q24.2,6.8 22,10.6 L16.4,15.6 L13.3,12.9 Z" fill="#686868"/><path d="M13.4,13.3 L16.1,15.6 L15.1,16.6 L12.4,14.3 Z" fill="#4e4e4e"/><path d="M12.2,14.4 L15,16.8 Q15.2,20.2 11.6,22.1 Q8,23.6 3.4,23.4 Q6.8,21 8.9,17.7 Q10.4,14.9 12.2,14.4 Z" fill="#3d7cc0"/><path d="M10.3,17.6 Q11.7,17.2 11.9,18.8" stroke="#fff" stroke-width="1.1" fill="none"/></g><text x="5.0" y="22.1" font-family="Liberation Sans" font-weight="700" font-size="9.2" fill="#fff" stroke="#fff" stroke-width="1.6" textLength="16.2" lengthAdjust="spacingAndGlyphs">123</text><text x="5.0" y="22.1" font-family="Liberation Sans" font-weight="700" font-size="9.2" fill="#3c3c3c" textLength="16.2" lengthAdjust="spacingAndGlyphs">123</text></svg>
<div class="a" style="left:644.5px;top:268px;width:133px;height:21.3px;background:#e6e6e6"></div>
<div class="t" style="left:654.5px;top:273.64px;font:700 12px 'Liberation Sans', sans-serif;line-height:12px;color:#505050;transform:scaleX(0.974);transform-origin:0 0;">Other Paste Options</div>
<svg class="a" style="left:651.9px;top:294.5px" width="26" height="26" viewBox="0 0 26 26"><path d="M0,3.3 Q0,2.2 1.1,2.2 H2.9 V18.3 H6 V21.2 H1.1 Q0,21.2 0,20.1 Z" fill="#e8bf7e"/><path d="M15.1,2.2 H17 Q18.1,2.2 18.1,3.3 V18.4 H15.1 Z" fill="#e8bf7e"/><path d="M3.2,4.7 V2.9 Q3.2,2.2 3.9,2.2 H6.2 Q6.4,0 9,0 Q11.6,0 11.8,2.2 H14.1 Q14.8,2.2 14.8,2.9 V4.7 Z" fill="#5e5e5e" stroke="#fff" stroke-width="0.9" paint-order="stroke"/><circle cx="9" cy="1.75" r="1.0" fill="#fff"/><g transform="translate(3.6,7.02) scale(1.000,0.986)" fill="none" stroke="#454545" stroke-width="1.25"><ellipse cx="2.1" cy="2.1" rx="1.55" ry="1.6"/><ellipse cx="6.9" cy="5.9" rx="1.55" ry="1.6"/><path d="M7.4,0.2 L1.6,7.8"/></g><g transform="translate(0.8,2.7) scale(0.85)"><path d="M17.4,7.8 Q21,3.8 23,5 Q24.2,6.8 22,10.6 L16.4,15.6 L13.3,12.9 Z" fill="#686868"/><path d="M13.4,13.3 L16.1,15.6 L15.1,16.6 L12.4,14.3 Z" fill="#4e4e4e"/><path d="M12.2,14.4 L15,16.8 Q15.2,20.2 11.6,22.1 Q8,23.6 3.4,23.4 Q6.8,21 8.9,17.7 Q10.4,14.9 12.2,14.4 Z" fill="#3d7cc0"/><path d="M10.3,17.6 Q11.7,17.2 11.9,18.8" stroke="#fff" stroke-width="1.1" fill="none"/></g></svg>
<svg class="a" style="left:682.0px;top:294.5px" width="26" height="26" viewBox="0 0 26 26"><path d="M0,3.3 Q0,2.2 1.1,2.2 H2.9 V18.3 H5.5 V21.2 H1.1 Q0,21.2 0,20.1 Z" fill="#e8bf7e"/><path d="M15.1,2.2 H17 Q18.1,2.2 18.1,3.3 V15.6 H15.1 Z" fill="#e8bf7e"/><path d="M3.2,4.7 V2.9 Q3.2,2.2 3.9,2.2 H6.2 Q6.4,0 9,0 Q11.6,0 11.8,2.2 H14.1 Q14.8,2.2 14.8,2.9 V4.7 Z" fill="#5e5e5e" stroke="#fff" stroke-width="0.9" paint-order="stroke"/><circle cx="9" cy="1.75" r="1.0" fill="#fff"/><g transform="translate(5.9,16.2) scale(1.000,1.000)"><rect x="1.05" y="1.05" width="13" height="4.9" rx="2.45" fill="none" stroke="#3d7cc0" stroke-width="2.1"/><path d="M5.4,5.3 L9.7,1.7" stroke="#3d7cc0" stroke-width="1.8"/></g></svg>
<svg class="a" style="left:712.1px;top:294.5px" width="26" height="26" viewBox="0 0 26 26"><path d="M0,3.3 Q0,2.2 1.1,2.2 H2.9 V18.3 H6 V21.2 H1.1 Q0,21.2 0,20.1 Z" fill="#e8bf7e"/><path d="M15.1,2.2 H17 Q18.1,2.2 18.1,3.3 V10 H15.1 Z" fill="#e8bf7e"/><path d="M3.2,4.7 V2.9 Q3.2,2.2 3.9,2.2 H6.2 Q6.4,0 9,0 Q11.6,0 11.8,2.2 H14.1 Q14.8,2.2 14.8,2.9 V4.7 Z" fill="#5e5e5e" stroke="#fff" stroke-width="0.9" paint-order="stroke"/><circle cx="9" cy="1.75" r="1.0" fill="#fff"/><rect x="9.8" y="11.8" width="11" height="10.4" fill="#fff" stroke="#fff" stroke-width="2.6"/><rect x="9.8" y="11.8" width="11" height="10.4" fill="#fff" stroke="#5e5e5e" stroke-width="1.1"/><path d="M11.4,20.6 l2.6,-3.8 l1.8,2.2 l1.4,-1.2 l2,2.8z" fill="#3d7cc0"/><circle cx="18.2" cy="14.5" r="1.1" fill="#e8bf7e"/></svg>
<svg class="a" style="left:742.2px;top:294.5px" width="26" height="26" viewBox="0 0 26 26"><path d="M0,3.3 Q0,2.2 1.1,2.2 H2.9 V18.3 H6 V21.2 H1.1 Q0,21.2 0,20.1 Z" fill="#e8bf7e"/><path d="M15.1,2.2 H17 Q18.1,2.2 18.1,3.3 V5.5 H15.1 Z" fill="#e8bf7e"/><path d="M3.2,4.7 V2.9 Q3.2,2.2 3.9,2.2 H6.2 Q6.4,0 9,0 Q11.6,0 11.8,2.2 H14.1 Q14.8,2.2 14.8,2.9 V4.7 Z" fill="#5e5e5e" stroke="#fff" stroke-width="0.9" paint-order="stroke"/><circle cx="9" cy="1.75" r="1.0" fill="#fff"/><rect x="9.4" y="6.8" width="11" height="10.4" fill="#fff" stroke="#fff" stroke-width="2.6"/><rect x="9.4" y="6.8" width="11" height="10.4" fill="#fff" stroke="#5e5e5e" stroke-width="1.1"/><path d="M11.0,15.6 l2.6,-3.8 l1.8,2.2 l1.4,-1.2 l2,2.8z" fill="#3d7cc0"/><circle cx="17.799999999999997" cy="9.5" r="1.1" fill="#e8bf7e"/><g transform="translate(5.2,16.2) scale(0.967,1.000)"><rect x="1.05" y="1.05" width="13" height="4.9" rx="2.45" fill="none" stroke="#3d7cc0" stroke-width="2.1"/><path d="M5.4,5.3 L9.7,1.7" stroke="#3d7cc0" stroke-width="1.8"/></g></svg>
<div class="a" style="left:645px;top:320.5px;width:132px;height:1px;background:#e1e1e1"></div>
<div class="t" style="left:676.5px;top:329.44px;font:400 12px 'Liberation Sans', sans-serif;line-height:12px;color:#585858;transform:scaleX(0.93);transform-origin:0 0;">Paste <u>S</u>pecial...</div>
<svg class="a" style="left:0;top:0" width="788" height="467"><ellipse cx="724" cy="201.2" rx="21.6" ry="15.6" fill="none" stroke="#f0567a" stroke-width="2.4"/></svg></body></html>
